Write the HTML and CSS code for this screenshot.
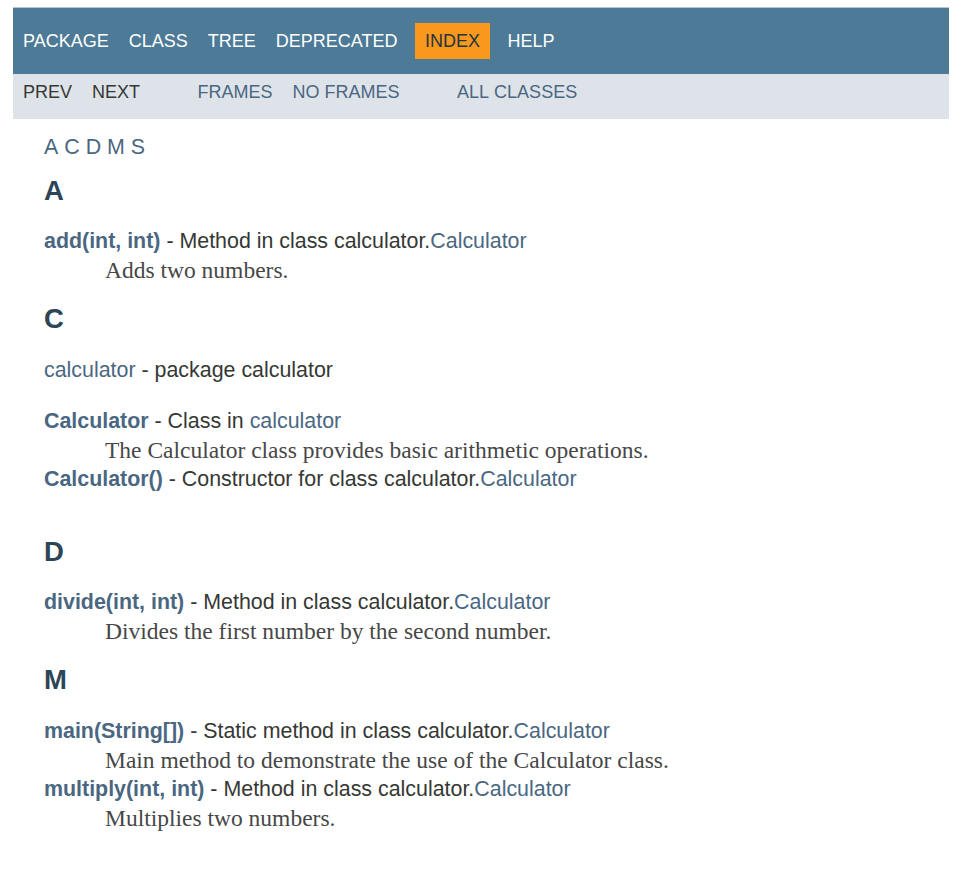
FILE: index.html
```
<!DOCTYPE html>
<html>

	<head>
		<meta charset="UTF-8">
		<title>Index</title>
		<link rel="stylesheet" href="styles.css">
	</head>

	<body>
		<!-- top navigation -->
		<div class="topNav">
			<ul class="navList">
				<li><a href="#">Package</a></li>
				<li><a href="#">Class</a></li>
				<li><a href="#">Tree</a></li>
				<li><a href="#">Deprecated</a></li>
				<li class="navBarCell1Rev">Index</li>
				<li><a href="#">Help</a></li>
			</ul>
		</div>
		<div class="subNav">
			<ul class="navList">
				<li>Prev</li>
				<li>Next</li>
			</ul>
			<ul class="navList">
				<li><a href="#">Frames</a></li>
				<li><a href="#">No&nbsp;Frames</a></li>
			</ul>
			<ul class="navList">
				<li><a href="#">All&nbsp;Classes</a></li>
			</ul>
		</div>

		<!-- index content -->
		<div class="contentContainer">
			<div class="letters">
				<a href="#I:A">A</a>&nbsp;<a href="#I:C">C</a>&nbsp;<a href="#I:D">D</a>&nbsp;<a href="#I:M">M</a>&nbsp;<a href="#I:S">S</a>
			</div>

			<h2 class="title" id="I:A">A</h2>
			<dl>
				<dt><a class="memberNameLink" href="#">add(int, int)</a> - Method in class calculator.<a href="#">Calculator</a></dt>
				<dd><div class="block">Adds two numbers.</div></dd>
			</dl>

			<h2 class="title" id="I:C">C</h2>
			<dl>
				<dt><a href="#">calculator</a> - package calculator</dt>
				<dd class="empty">&nbsp;</dd>
				<dt><a class="memberNameLink" href="#">Calculator</a> - Class in <a href="#">calculator</a></dt>
				<dd><div class="block">The Calculator class provides basic arithmetic operations.</div></dd>
				<dt><a class="memberNameLink" href="#">Calculator()</a> - Constructor for class calculator.<a href="#">Calculator</a></dt>
				<dd class="empty">&nbsp;</dd>
			</dl>

			<h2 class="title" id="I:D">D</h2>
			<dl>
				<dt><a class="memberNameLink" href="#">divide(int, int)</a> - Method in class calculator.<a href="#">Calculator</a></dt>
				<dd><div class="block">Divides the first number by the second number.</div></dd>
			</dl>

			<h2 class="title" id="I:M">M</h2>
			<dl>
				<dt><a class="memberNameLink" href="#">main(String[])</a> - Static method in class calculator.<a href="#">Calculator</a></dt>
				<dd><div class="block">Main method to demonstrate the use of the Calculator class.</div></dd>
				<dt><a class="memberNameLink" href="#">multiply(int, int)</a> - Method in class calculator.<a href="#">Calculator</a></dt>
				<dd><div class="block">Multiplies two numbers.</div></dd>
			</dl>
		</div>
	</body>

</html>
```
FILE: styles.css
```
body {
	margin: 0;
	padding: 7px 25px 0 13px;
	background-color: #ffffff;
	color: #353833;
	font-family: "Liberation Sans", Arial, Helvetica, sans-serif;
	font-size: 21.4px;
}

a:link,
a:visited {
	text-decoration: none;
	color: #4A6782;
}

/* navigation bars */
.topNav {
	background-color: #4D7A97;
	color: #FFFFFF;
	border-top: 1px solid #b7c3cc;
	height: 51px;
	padding-top: 15px;
	font-size: 18px;
	overflow: hidden;
}

.topNav a:link,
.topNav a:visited {
	color: #FFFFFF;
}

.subNav {
	display: flex;
	background-color: #dee3e9;
	height: 45px;
	font-size: 18px;
	overflow: hidden;
}

ul.navList {
	display: flex;
	margin: 0 37.5px 0 0;
	padding: 0;
	list-style: none;
}

ul.navList li {
	padding: 7.5px 10px;
	line-height: 21px;
	text-transform: uppercase;
}

.navBarCell1Rev {
	background-color: #F8981D;
	color: #253441;
	margin: 0 7.5px;
}

/* index */
.contentContainer {
	padding: 17.5px 30px 40px 31px;
}

.letters {
	line-height: 20px;
}

h2.title {
	color: #2c4557;
	font-size: 27.5px;
	line-height: 32px;
	margin: 21px 0 22.5px;
}

.letters + h2.title {
	margin-top: 18px;
}

dl {
	margin: 0;
}

dt {
	line-height: 24px;
}

dd {
	margin: 0 0 5px 61px;
	line-height: 24px;
}

dd.empty {
	margin-bottom: 3px;
}

dd.empty:last-child {
	margin-bottom: 14px;
}

.memberNameLink {
	font-weight: bold;
}

div.block {
	font-family: "Liberation Serif", Georgia, "Times New Roman", serif;
	font-size: 23.5px;
	line-height: 24px;
	color: #474747;
	margin: 5px 0 2px;
}
```
